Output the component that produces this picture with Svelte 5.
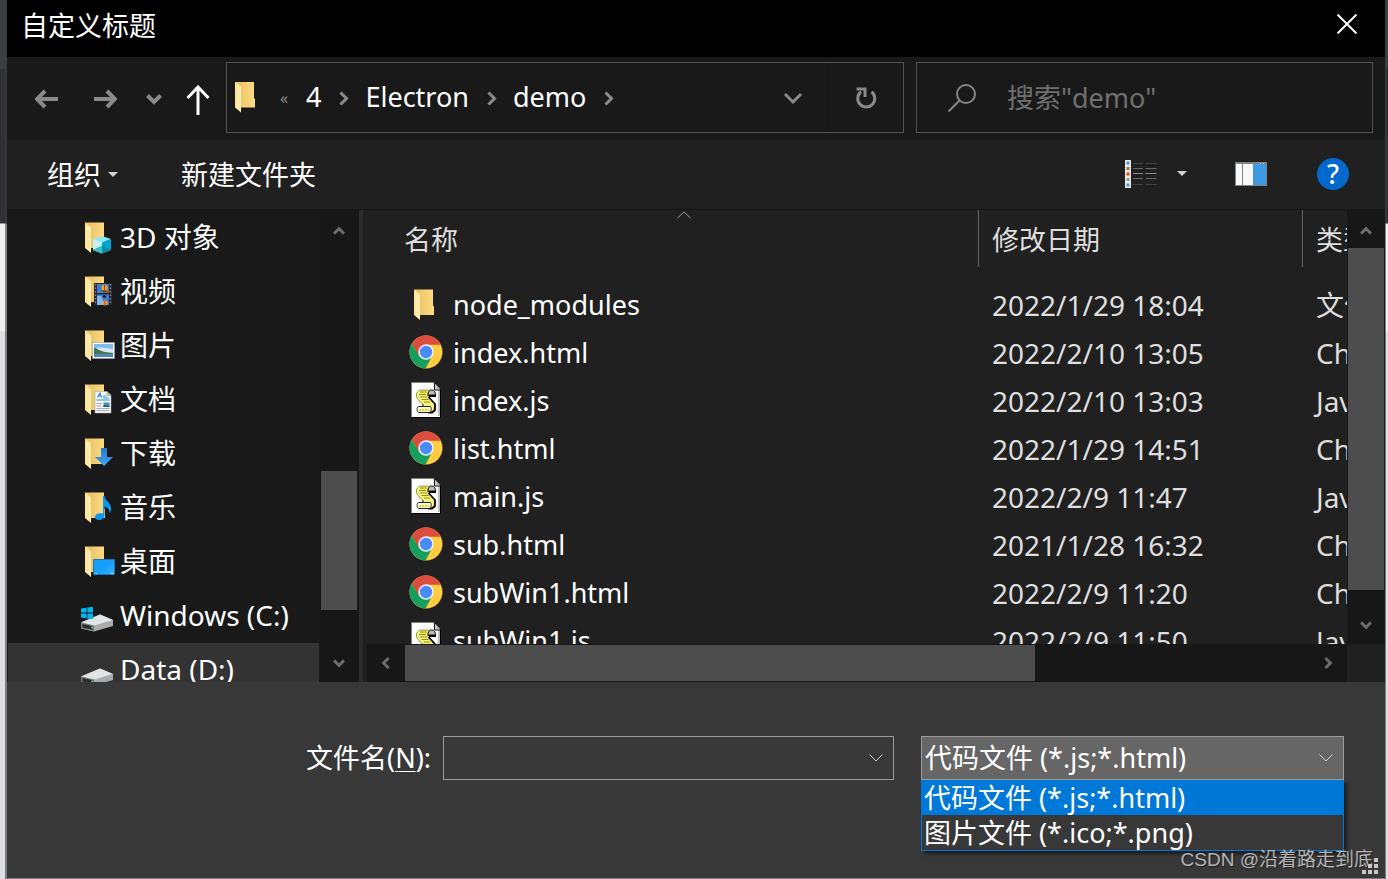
<script lang="ts">
	interface Place {
		name: string;
		icon: string;
		active?: boolean;
	}

	interface FileRow {
		name: string;
		kind: 'folder' | 'html' | 'js';
		date: string;
		type: string;
	}

	const places: Place[] = [
		{ name: '3D 对象', icon: 'cube' },
		{ name: '视频', icon: 'video' },
		{ name: '图片', icon: 'picture' },
		{ name: '文档', icon: 'document' },
		{ name: '下载', icon: 'download' },
		{ name: '音乐', icon: 'music' },
		{ name: '桌面', icon: 'desktop' },
		{ name: 'Windows (C:)', icon: 'system' },
		{ name: 'Data (D:)', icon: 'drive', active: true }
	];

	const files: FileRow[] = [
		{ name: 'node_modules', kind: 'folder', date: '2022/1/29 18:04', type: '文件夹' },
		{ name: 'index.html', kind: 'html', date: '2022/2/10 13:05', type: 'Chrome' },
		{ name: 'index.js', kind: 'js', date: '2022/2/10 13:03', type: 'JavaScript' },
		{ name: 'list.html', kind: 'html', date: '2022/1/29 14:51', type: 'Chrome' },
		{ name: 'main.js', kind: 'js', date: '2022/2/9 11:47', type: 'JavaScript' },
		{ name: 'sub.html', kind: 'html', date: '2021/1/28 16:32', type: 'Chrome' },
		{ name: 'subWin1.html', kind: 'html', date: '2022/2/9 11:20', type: 'Chrome' },
		{ name: 'subWin1.js', kind: 'js', date: '2022/2/9 11:50', type: 'JavaScript' }
	];

	const crumbs = ['4', 'Electron', 'demo'];
	const filters = ['代码文件 (*.js;*.html)', '图片文件 (*.ico;*.png)'];

	let filter = $state(filters[0]);
	let filename = $state('');
	let search = $state('');

	// space before the thumb, thumb, space after it
	const tracks = {
		places: [223, 139, 34],
		rows: [0, 342, 16],
		columns: [0, 629, 274]
	};

	const fr = (parts: number[]): string => parts.map(p => `${p}fr`).join(' ');
</script>

{#snippet chevron(dir: string)}
	<svg class="chevron {dir}" width="12" height="12" viewBox="0 0 12 12" aria-hidden="true">
		<path d="M1 8.6 6 3.6l5 5" />
	</svg>
{/snippet}

{#snippet folder()}
	<path d="M0 0h19v16l1 1v8.500H6z" fill="url(#folder-back)" />
	<path d="M0 0l6 5v25.500L0 25.500z" fill="url(#folder-front)" />
{/snippet}

{#snippet scrollbar(label: string, parts: number[], horizontal = false)}
	<div class="scrollbar" class:horizontal role="group" aria-label={label}>
		<button type="button" aria-label="{label} -">{@render chevron(horizontal ? 'left' : 'up')}</button>
		<div class="track" style="grid-template-{horizontal ? 'columns' : 'rows'}: {fr(parts)}">
			<div class="thumb"></div>
		</div>
		<button type="button" aria-label="{label} +">{@render chevron(horizontal ? 'right' : 'down')}</button>
	</div>
{/snippet}

{#snippet placeIcon(icon: string)}
	<svg class="place-icon" width="34" height="32" viewBox="0 0 34 32" aria-hidden="true">
		{#if icon === 'system' || icon === 'drive'}
			<path d="M0 22.500 19 14.500 32 20v6L13 31.500 0 28.500z" fill="#a9abad" />
			<path d="M0 22.500 19 14.500 32 20 13 25.500z" fill="#e3e4e6" />
			<path d="M0 22.500 13 25.500v6L0 28.500z" fill="#77797b" />
			<path d="M1.500 24 11.500 26.300v3.400L1.500 27.500z" fill="#2b2c2e" />
			<circle cx="11" cy="27.500" r="1" fill="#3fe04a" />
			{#if icon === 'system'}
				<path d="M0 8.500 5.500 7.700V12.600H0zM6.300 7.600 12 6.800v5.800H6.300zM0 13.400h5.500v5L0 17.600zM6.300 13.400H12v5.900l-5.700-.8z" fill="#00b7f0" />
			{/if}
		{:else}
			<g transform="translate(4 .5)">{@render folder()}</g>
		{/if}
		{#if icon === 'cube'}
			<path d="M12 17l9-3 9 3-9 4z" fill="#8ee8f3" />
			<path d="M12 17l9 3.500v11L12 28z" fill="#c4f0f3" />
			<path d="M30 17l-9 3.500v11l9-3.500z" fill="#00a5cf" />
			<path d="M12 28l9-4v7.500zM21 24l9 4-9 3.500z" fill="#0c8f9d" />
			<path d="M12 28l9-4v7.500z" fill="#35c3cc" />
		{:else if icon === 'video'}
			<rect x="13" y="7" width="18" height="22" fill="#26282c" />
			<path d="M16 8h12v9H16zM16 18.500h12V29H16z" fill="#3c7ad6" />
			<path d="M14.500 8v21M29.500 8v21" stroke="#85888c" stroke-width="1.300" stroke-dasharray="1.500 2" />
			<path d="M16 15h4l3 2h5v-2h-5z" fill="#d83a2b" />
			<path d="M16 20h4l4 9h-8z" fill="#84b6ee" />
			<ellipse cx="23.500" cy="12" rx="3" ry="3.500" fill="#e4ad18" />
			<path d="M21 14h5l-2 3h-1z" fill="#25763a" />
			<path d="M22 19.500h3v2h-3z" fill="#111" />
			<ellipse cx="24" cy="27" rx="2.700" ry="2.500" fill="#e4ad18" />
			<path d="M23.500 9v6M24 25v4" stroke="#c3352a" />
		{:else if icon === 'picture'}
			<rect x="11.500" y="12.500" width="22" height="16" fill="#f4f6f8" stroke="#9aa0a6" stroke-width=".6" />
			<path d="M13 14h19v13H13z" fill="#7fbaf0" />
			<path d="M13 19c5-3 12-1 19 0v4H13z" fill="#d3e9f5" />
			<path d="M13 17.500c3 1 6 3.500 11 4.500l8 1v1.500H13z" fill="#44764b" />
			<path d="M13 24h19v3H13z" fill="#4f88b8" />
		{:else if icon === 'document'}
			<path d="M14 7.500h12l4 4V29H14z" fill="#f7f8f9" stroke="#a6abb0" stroke-width=".6" />
			<path d="M26 7.500v4h4z" fill="#c4cad0" stroke="#8f959c" stroke-width=".6" />
			<path d="M16.500 13.500 19 9l1.500 4.500M17.500 12h3M22 12h3M22 14h6M15.500 16h13" stroke="#2d8fd8" fill="none" stroke-width="1.200" />
			<path d="M15.500 19.500H21M15.500 22H21M15.500 24.500h13M15.500 26.500h13" stroke="#a8adb3" />
			<path d="M22.500 18.500h6v4.500h-6z" fill="#4791cc" />
			<path d="M22.500 21l6 1v1h-6z" fill="#315f42" />
		{:else if icon === 'download'}
			<path d="M20 10h6v9h6l-9 9-9-9h6z" fill="url(#download)" />
		{:else if icon === 'music'}
			<path d="M22 4h1.500c.5 5 7.500 7 6.500 13.500-.3 2-1 3-1.500 3.500 0-4-2-5.500-5-6.500v9c0 3-2.500 4.500-5.500 4.500-2.500 0-4-1.200-4-3 0-2.700 4-4.500 8-3.500z" fill="#0a98ee" />
		{:else if icon === 'desktop'}
			<path d="M12.500 13.500h21v15h-21z" fill="url(#desktop)" stroke="#1874b4" />
			<path d="M14.500 27.500h1.500M30 27.500h2" stroke="#d5efff" />
		{/if}
	</svg>
{/snippet}

{#snippet fileIcon(kind: string)}
	<svg class="file-icon" width="34" height="40" viewBox="0 0 34 40" aria-hidden="true">
		{#if kind === 'folder'}
			<g transform="translate(5 3.500)">{@render folder()}</g>
		{:else if kind === 'html'}
			<circle cx="17" cy="18" r="16.500" fill="#ffcd40" />
			<path d="M2.700 9.800A16.500 16.500 0 0 1 31.500 10.200L32 10.800H17L9.800 22.100z" fill="#dc4c3f" />
			<path d="M2.700 9.800A16.500 16.500 0 0 0 16.500 34.500L23.500 21.500 10.500 22.500z" fill="#17a05d" />
			<circle cx="17" cy="18" r="7.700" fill="#f3f5f6" />
			<circle cx="17" cy="18" r="6.200" fill="#4c8bf5" />
		{:else}
			<path d="M2.500.5h23l6 6.500v28.500h-29z" fill="#fff" />
			<path d="M2.500 35V.5h23" fill="none" stroke="#808080" />
			<path d="M30 7v27" stroke="#bdbdbd" stroke-width="2" />
			<path d="M31.500 7v28.500h-29" fill="none" stroke="#000" />
			<path d="M25.500.5l6 6.500v1h-6z" fill="#c9c9c9" stroke="#111" />
			<path d="M10.500 8H21l-2.500 4 .5 3 7 7-1 8H14v-8l-3-2-3.500-5v-4z" fill="#f7f27c" stroke="#83832e" stroke-width=".8" />
			<path d="M11 10h7M10 12.500h7M11 15h7M12.500 17.500h7M15 20h6" stroke="#8c8c12" />
			<path d="M19 13.500c0-4 1.500-5.500 4-5.500 2 0 3.500 1.500 3.500 5h-5z" fill="#bdbdbd" stroke="#111" />
			<path d="M20 14h7" stroke="#000" stroke-width="2" />
			<path d="M19.500 15l6.500 7v6l-3 2.500h-4" fill="none" stroke="#000" stroke-width="1.800" />
			<path d="M10 24.500h11.500c1.500 2 .5 6-1.500 6H10c-2.500 0-2.500-6 0-6z" fill="#fffde0" stroke="#222" />
			<path d="M10 28h10" stroke="#e3da00" stroke-width="2" stroke-dasharray="2 1" />
			<path d="M14 22v3" stroke="#333" />
		{/if}
	</svg>
{/snippet}

<svg class="defs" width="0" height="0" aria-hidden="true">
	<defs>
		<linearGradient id="folder-back">
			<stop offset=".3" stop-color="#edc66c" />
			<stop offset="1" stop-color="#fedd82" />
		</linearGradient>
		<linearGradient id="folder-front">
			<stop offset="0" stop-color="#ffe394" />
			<stop offset="1" stop-color="#ffeeb4" />
		</linearGradient>
		<linearGradient id="download" x2="0" y2="1">
			<stop offset="0" stop-color="#2179ce" />
			<stop offset="1" stop-color="#45a1ef" />
		</linearGradient>
		<linearGradient id="desktop" y2="1">
			<stop offset=".5" stop-color="#149ffa" />
			<stop offset="1" stop-color="#3db2ff" />
		</linearGradient>
	</defs>
</svg>

<div class="backdrop">
	<main class="dialog">
		<header class="titlebar">
			<h1>自定义标题</h1>
			<button type="button" class="close" aria-label="关闭">
				<svg width="20" height="20" viewBox="0 0 20 20"><path d="M.5.5l19 19M19.500.5l-19 19" /></svg>
			</button>
		</header>

		<div class="navbar">
			<nav class="history" aria-label="导航">
				<button type="button" aria-label="后退">
					<svg width="24" height="20" viewBox="0 0 24 20"><path d="M23 10H2M10 2l-8 8 8 8" /></svg>
				</button>
				<button type="button" aria-label="前进">
					<svg width="24" height="20" viewBox="0 0 24 20"><path d="M1 10h21M14 2l8 8-8 8" /></svg>
				</button>
				<button type="button" class="recent" aria-label="最近">
					<svg width="16" height="12" viewBox="0 0 16 12"><path d="M1.500 2.500 8 9l6.500-6.500" /></svg>
				</button>
				<button type="button" class="up" aria-label="向上">
					<svg width="24" height="30" viewBox="0 0 24 30"><path d="M12 30V2M1.500 13 12 2l10.500 11" /></svg>
				</button>
			</nav>
			<div class="boxes">
				<div class="address">
					<svg class="address-icon" width="22" height="32" viewBox="0 0 22 32" aria-hidden="true">{@render folder()}</svg>
					<span class="more">«</span>
					{#each crumbs as crumb}
						<a href="#{crumb}">{crumb}</a>
						<svg class="crumb-arrow" width="10" height="16" viewBox="0 0 10 16" aria-hidden="true">
							<path d="M1.500 2.500 7.500 8.500l-6 6" />
						</svg>
					{/each}
					<button type="button" class="previous" aria-label="以前的位置">
						<svg width="20" height="14" viewBox="0 0 20 14"><path d="M2 3l8 8 8-8" /></svg>
					</button>
					<button type="button" class="refresh" aria-label="刷新">
						<svg width="22" height="24" viewBox="0 0 22 24">
							<path d="M16.500 5.800A8.500 8.500 0 1 1 6 5.800" />
							<path d="M1.500 3H10v8" />
						</svg>
					</button>
				</div>
				<label class="search">
					<svg width="28" height="28" viewBox="0 0 28 28" aria-hidden="true">
						<circle cx="18" cy="10" r="9" />
						<path d="M11.500 16.500.500 27.500" />
					</svg>
					<input type="search" bind:value={search} placeholder={'搜索"demo"'} aria-label="搜索" />
				</label>
			</div>
		</div>

		<div class="toolbar">
			<button type="button" class="organize">组织<span class="caret"></span></button>
			<button type="button">新建文件夹</button>
			<div class="tools">
				<button type="button" class="view" aria-label="更改视图">
					<svg width="32" height="28" viewBox="0 0 32 28">
						<path d="M0 0h6v28H0z" fill="#e9e9e9" />
						<path d="M1.500 1.500h3v3h-3z" fill="#4a9ade" />
						<path d="M1.500 7h3v3h-3z" fill="#97783e" />
						<path d="M1.500 12.500h3v3h-3z" fill="#e2482d" />
						<path d="M1.500 18h3v3h-3z" fill="#88a878" />
						<path d="M1.500 23.500h3v3h-3z" fill="#4aa0cf" />
						<path d="M8 3.500h10M20.500 3.500h11M8 24.500h10M20.500 24.500h11" stroke="#444" />
						<path d="M8 8.500h10M20.500 8.500h11M8 18.500h10M20.500 18.500h11" stroke="#696969" />
						<path d="M8 13.500h10M20.500 13.500h11" stroke="#8a8a8a" />
					</svg>
					<span class="caret"></span>
				</button>
				<button type="button" aria-label="预览窗格">
					<svg width="32" height="24" viewBox="0 0 32 24">
						<path d="M0 0h32v24H0z" fill="#7f8588" />
						<path d="M1 2h6v21H1zM8 2h10v21H8z" fill="#f8f8f9" />
						<path d="M18 2h13v21H18z" fill="#3d99e2" />
						<path d="M25 1.500h1M28 1.500h1" stroke="#ccc" />
					</svg>
				</button>
				<button type="button" class="help" aria-label="帮助">?</button>
			</div>
		</div>

		<div class="browser">
			<ul class="places">
				{#each places as place}
					<li class:active={place.active}>
						{@render placeIcon(place.icon)}
						<a href="#{place.icon}">{place.name}</a>
					</li>
				{/each}
			</ul>
			{@render scrollbar('位置', tracks.places)}
			<section class="pane">
				<div class="list">
					<table>
						<colgroup>
							<col />
							<col class="col-date" />
							<col class="col-type" />
						</colgroup>
						<thead>
							<tr>
								<th>
									<svg class="sort" width="14" height="8" viewBox="0 0 14 8" aria-hidden="true"><path d="M.5 7 7 1l6.500 6" /></svg>
									名称
								</th>
								<th>修改日期</th>
								<th>类型</th>
							</tr>
						</thead>
						<tbody>
							{#each files as file}
								<tr>
									<td><div class="name">{@render fileIcon(file.kind)}{file.name}</div></td>
									<td>{file.date}</td>
									<td>{file.type}</td>
								</tr>
							{/each}
						</tbody>
					</table>
				</div>
				{@render scrollbar('行', tracks.rows)}
				{@render scrollbar('列', tracks.columns, true)}
			</section>
		</div>

		<footer>
			<label for="filename">文件名(<u>N</u>):</label>
			<div class="combo filename">
				<input id="filename" type="text" bind:value={filename} />
				<svg width="14" height="8" viewBox="0 0 14 8" aria-hidden="true"><path d="M.5.5 7 7 13.500.5" /></svg>
			</div>
			<div class="combo filter">
				<select bind:value={filter} aria-label="文件类型">
					{#each filters as option}
						<option>{option}</option>
					{/each}
				</select>
				<svg width="14" height="8" viewBox="0 0 14 8" aria-hidden="true"><path d="M.5.5 7 7 13.500.5" /></svg>
				<ul class="options" role="listbox" aria-label="文件类型">
					{#each filters as option}
						<li role="option" aria-selected={option === filter}>{option}</li>
					{/each}
				</ul>
			</div>
			<span class="watermark">CSDN @沿着路走到底</span>
			<svg class="grip" width="16" height="16" viewBox="0 0 16 16" aria-hidden="true">
				<path d="M12 0h4v4h-4zM6 6h4v4H6zM12 6h4v4h-4zM0 12h4v4H0zM6 12h4v4H6zM12 12h4v4h-4z" />
			</svg>
		</footer>
	</main>
</div>

<style>
	:global(body) {
		margin: 0;
	}

	.defs {
		position: absolute;
	}

	.backdrop {
		height: 100vh;
		box-sizing: border-box;
		padding: 0 2px 0 5px;
		background: linear-gradient(#393e42 69px, #2f3136 69px 223px, #f0f0f0 224px 331px, #dcdee1 332px);
		font-family: 'Noto Sans', 'Noto Sans CJK SC', sans-serif;
		font-size: 27px;
		line-height: 36px;
		color: #fff;
	}

	.dialog {
		height: 100%;
		box-sizing: border-box;
		display: flex;
		flex-direction: column;
		overflow: hidden;
		border: solid rgba(60, 60, 60, 0.6);
		border-width: 0 1px 1px 2px;
		background: #191919;
		background-clip: padding-box;
	}

	button,
	input,
	select {
		font: inherit;
		color: inherit;
		background: none;
		border: 0;
		padding: 0;
		margin: 0;
		border-radius: 0;
		outline: 0;
	}

	button {
		display: flex;
		align-items: center;
		justify-content: center;
	}

	a {
		color: inherit;
		text-decoration: none;
	}

	svg {
		flex: none;
	}

	.titlebar {
		display: flex;
		justify-content: space-between;
		background: #000;
		height: 57px;
		padding-left: 14px;
	}

	h1 {
		margin: 0;
		font-size: 27px;
		font-weight: 400;
		line-height: 52px;
	}

	.close {
		width: 76px;
		height: 48px;
	}

	.close path {
		stroke: #fff;
		stroke-width: 2;
	}

	.navbar {
		display: flex;
		padding: 5px 12px 7px 11px;
	}

	.history {
		display: flex;
		width: 208px;
	}

	.history button {
		width: 58px;
		padding-top: 2px;
	}

	.history .recent {
		width: 40px;
	}

	.history .up {
		width: 48px;
		padding-top: 4px;
	}

	.history path {
		fill: none;
		stroke: #8a8a8a;
		stroke-width: 4;
	}

	.history .up path {
		stroke: #fff;
		stroke-width: 3;
	}

	.boxes {
		flex: 1;
		display: grid;
		grid-template-columns: minmax(0, 678fr) minmax(0, 457fr);
		gap: 12px;
	}

	.address,
	.search {
		display: flex;
		align-items: center;
		height: 69px;
		border: 1px solid #535353;
	}

	.address {
		padding-left: 8px;
	}

	.address a {
		padding-bottom: 2px;
	}

	.more {
		width: 8px;
		margin: 0 18px 0 23px;
		font-size: 16px;
		color: #8a8a8a;
	}

	.crumb-arrow {
		margin: 0 16px 0 18px;
	}

	.crumb-arrow path,
	.previous path,
	.refresh path {
		fill: none;
		stroke: #8a8a8a;
		stroke-width: 3;
	}

	.previous {
		margin-left: auto;
		align-self: stretch;
		width: 72px;
		border-right: 1px solid #151515;
	}

	.refresh {
		align-self: stretch;
		width: 74px;
	}

	.search svg {
		margin: 0 31px;
		fill: none;
		stroke: #868686;
		stroke-width: 2;
	}

	.search input {
		flex: 1;
		min-width: 0;
		appearance: none;
	}

	.search input::placeholder {
		color: #6f6f6f;
		opacity: 1;
	}

	.toolbar {
		display: flex;
		align-items: center;
		height: 69px;
		padding: 0 36px 0 40px;
		background: #202020;
		border-bottom: 1px solid #151515;
	}

	.organize {
		margin-right: 63px;
		gap: 7px;
	}

	.caret {
		border: solid transparent;
		border-width: 5px 5px 0;
		border-top-color: #d0d0d0;
	}

	.tools {
		display: flex;
		align-items: center;
		margin: 0 0 2px auto;
	}

	.view {
		gap: 20px;
		margin-right: 48px;
	}

	.help {
		width: 32px;
		height: 32px;
		margin-left: 50px;
		border-radius: 50%;
		background: #0368cc;
		font-size: 27px;
		font-weight: 500;
	}

	.browser {
		flex: 1;
		min-height: 0;
		display: flex;
	}

	.places {
		width: 312px;
		margin: 0 1px 0 0;
		padding: 1px 0 0 1px;
		box-sizing: border-box;
		list-style: none;
		overflow: hidden;
		font-size: 28px;
	}

	.places li {
		display: flex;
		align-items: center;
		gap: 5px;
		height: 54px;
		padding-left: 73px;
	}

	.places a {
		padding-bottom: 2px;
	}

	.places .active {
		background: #333;
	}

	.scrollbar {
		width: 38px;
		box-sizing: border-box;
		display: flex;
		flex-direction: column;
		padding: 0 1px;
		background: #171717;
	}

	.scrollbar.horizontal {
		width: auto;
		flex-direction: row;
		padding: 1px 0;
		margin-left: 4px;
	}

	.scrollbar button {
		flex: 0 0 38px;
	}

	.track {
		flex: 1;
		display: grid;
	}

	.thumb {
		grid-area: 2 / 1;
		background: #4d4d4d;
	}

	.horizontal .thumb {
		grid-area: 1 / 2;
	}

	.chevron path {
		fill: none;
		stroke: #6b6b6b;
		stroke-width: 3;
	}

	.chevron.up {
		margin-top: 4px;
	}

	.down {
		transform: rotate(180deg);
	}

	.left {
		transform: rotate(-90deg);
	}

	.right {
		transform: rotate(90deg);
	}

	.pane {
		flex: 1;
		min-width: 0;
		display: grid;
		grid-template: minmax(0, 1fr) 38px / minmax(0, 1fr) 38px;
		margin-left: 1px;
		border-left: 4px solid #2b2b2b;
		background: #202020;
	}

	.list {
		overflow: hidden;
		padding-left: 27px;
	}

	table {
		width: 100%;
		table-layout: fixed;
		border-collapse: separate;
		border-spacing: 0;
		color: #dedede;
	}

	.col-date {
		width: 324px;
	}

	.col-type {
		width: 45px;
	}

	th,
	td {
		padding: 0 0 0 14px;
		text-align: left;
		font-weight: 400;
		white-space: nowrap;
		overflow: hidden;
	}

	th {
		position: relative;
		height: 55px;
		padding-top: 2px;
	}

	th + th {
		border-left: 1px solid #636363;
		padding-left: 13px;
	}

	.sort {
		position: absolute;
		top: 1px;
		left: 50%;
		margin-left: -7px;
		fill: none;
		stroke: #9a9a9a;
	}

	thead::after {
		content: '';
		display: block;
		height: 15px;
	}

	td {
		height: 46px;
		padding-bottom: 2px;
		font-size: 28px;
	}

	.name {
		display: flex;
		align-items: center;
		gap: 10px;
		padding-left: 5px;
		font-size: 27px;
		color: #fff;
	}

	.file-icon {
		margin-top: 2px;
	}

	footer {
		position: relative;
		display: flex;
		align-items: flex-start;
		padding: 54px 41px 98px 40px;
		background: #383838;
	}

	footer label {
		width: 384px;
		text-align: right;
		line-height: 44px;
	}

	u {
		text-decoration-thickness: 1px;
		text-underline-offset: 3px;
	}

	.combo {
		position: relative;
	}

	.combo input,
	.combo select {
		display: block;
		width: 100%;
		height: 44px;
		box-sizing: border-box;
		border: 1px solid #9b9b9b;
		padding: 0 40px 0 3px;
		appearance: none;
	}

	.combo select {
		background: #666;
	}

	.combo > svg {
		position: absolute;
		top: 18px;
		right: 11px;
		fill: none;
		stroke: #d0d0d0;
		pointer-events: none;
	}

	.filename {
		flex: 451;
		margin: 0 27px 0 12px;
	}

	.filter {
		flex: 423;
	}

	.options {
		position: absolute;
		top: 44px;
		left: 0;
		right: 0;
		margin: 0;
		padding: 0;
		list-style: none;
		background: #383838;
		border: 1px solid #0078d7;
		border-top: 0;
		box-shadow: 3px 3px 3px rgba(0, 0, 0, 0.5);
	}

	.options li {
		padding-left: 2px;
		line-height: 35px;
	}

	.options [aria-selected='true'] {
		background: #0078d7;
	}

	.watermark {
		position: absolute;
		right: 12px;
		bottom: 4px;
		font-family: 'Liberation Sans', 'Noto Sans CJK SC', sans-serif;
		font-size: 19px;
		line-height: 28px;
		color: #b4b4b4;
		text-shadow: 1px 1px 1px #222;
	}

	.grip {
		position: absolute;
		right: 7px;
		bottom: 4px;
		fill: #c8c8c8;
	}
</style>
